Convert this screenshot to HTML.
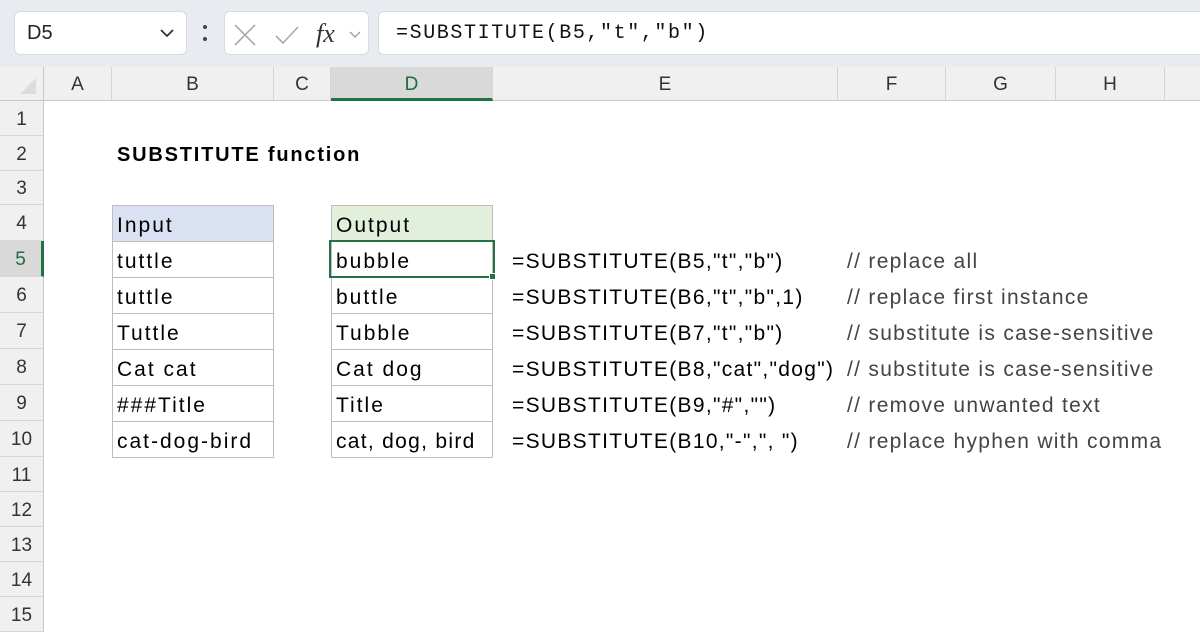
<!DOCTYPE html>
<html><head><style>
*{margin:0;padding:0;box-sizing:border-box}
body{width:1200px;height:630px;overflow:hidden;background:#fff;font-family:"Liberation Sans",sans-serif;position:relative}
.a{position:absolute}
.tb{left:0;top:0;width:1200px;height:67px;background:#e8ecf1}
.box{background:#fff;border:1px solid #d6dbe1;border-radius:6px;height:44px;top:11px}
.ch{top:67px;height:34px;background:#f0f0f0;border-right:1px solid #d4d4d4;border-bottom:1px solid #c8c8c8;text-align:center;line-height:36px;font-size:19px;color:#333}
.rh{left:0;width:44px;background:#f0f0f0;border-bottom:1px solid #d8d8d8;border-right:1px solid #c8c8c8;text-align:center;font-size:19px;color:#333}
.c{font-size:21px;color:#000;padding-left:5px;line-height:36px;white-space:nowrap;letter-spacing:1.3px;margin-top:2px}
.w{letter-spacing:2px}
.bx{border:1px solid #bdbdbd;height:37px}
</style></head><body>
<div class="a tb"></div>
<div class="a box" style="left:14px;width:173px"></div>
<div class="a" style="left:27px;top:22px;font-size:20px;color:#222">D5</div>
<svg class="a" style="left:160px;top:28px" width="14" height="10"><path d="M1 2 L7 8 L13 2" stroke="#333" stroke-width="1.8" fill="none"/></svg>
<div class="a" style="left:203px;top:25px;width:4px;height:4px;background:#444;border-radius:2px"></div>
<div class="a" style="left:203px;top:37px;width:4px;height:4px;background:#444;border-radius:2px"></div>
<div class="a box" style="left:224px;width:145px"></div>
<svg class="a" style="left:232px;top:22px" width="130" height="26"><path d="M3 3 L23 23 M23 3 L3 23" stroke="#aaa" stroke-width="1.6"/><path d="M44 14 L51 21 L66 5" stroke="#aaa" stroke-width="1.6" fill="none"/><path d="M118 10 L123 15 L128 10" stroke="#999" stroke-width="1.3" fill="none"/></svg>
<div class="a" style="left:316px;top:19px;font-family:'Liberation Serif',serif;font-style:italic;font-size:26px;color:#333">fx</div>
<div class="a box" style="left:378px;width:840px"></div>
<div class="a" style="left:396px;top:22px;font-family:'Liberation Mono',monospace;font-size:20px;color:#111;letter-spacing:1.6px">=SUBSTITUTE(B5,"t","b")</div>

<div class="a" style="left:0;top:67px;width:44px;height:34px;background:#f0f0f0;border-right:1px solid #c8c8c8;border-bottom:1px solid #c8c8c8"></div>
<svg class="a" style="left:18px;top:76px" width="20" height="20"><path d="M18 2 L18 18 L2 18Z" fill="#dcdcdc"/></svg>
<div class="a ch" style="left:44px;width:68px">A</div>
<div class="a ch" style="left:112px;width:162px">B</div>
<div class="a ch" style="left:274px;width:57px">C</div>
<div class="a ch" style="left:331px;width:162px;background:#d9d9d9;border-bottom:3px solid #217346;color:#1e6b3f">D</div>
<div class="a ch" style="left:493px;width:345px">E</div>
<div class="a ch" style="left:838px;width:108px">F</div>
<div class="a ch" style="left:946px;width:110px">G</div>
<div class="a ch" style="left:1056px;width:109px">H</div>
<div class="a ch" style="left:1165px;width:40px"></div>

<div class="a rh" style="top:101px;height:35px;line-height:37px">1</div>
<div class="a rh" style="top:136px;height:35px;line-height:37px">2</div>
<div class="a rh" style="top:171px;height:34px;line-height:36px">3</div>
<div class="a rh" style="top:205px;height:36px;line-height:38px">4</div>
<div class="a rh" style="top:241px;height:36px;line-height:38px;background:#d9d9d9;color:#1e6b3f;border-right:3px solid #217346">5</div>
<div class="a rh" style="top:277px;height:36px;line-height:38px">6</div>
<div class="a rh" style="top:313px;height:36px;line-height:38px">7</div>
<div class="a rh" style="top:349px;height:36px;line-height:38px">8</div>
<div class="a rh" style="top:385px;height:36px;line-height:38px">9</div>
<div class="a rh" style="top:421px;height:36px;line-height:38px">10</div>
<div class="a rh" style="top:457px;height:35px;line-height:37px">11</div>
<div class="a rh" style="top:492px;height:35px;line-height:37px">12</div>
<div class="a rh" style="top:527px;height:35px;line-height:37px">13</div>
<div class="a rh" style="top:562px;height:35px;line-height:37px">14</div>
<div class="a rh" style="top:597px;height:35px;line-height:37px">15</div>

<div class="a" style="left:117px;top:144px;font-size:20px;font-weight:bold;letter-spacing:1.8px">SUBSTITUTE function</div>

<div class="a bx" style="left:112px;top:205px;width:162px;background:#d9e1f2"></div>
<div class="a bx" style="left:331px;top:205px;width:162px;background:#e2efda"></div>
<div class="a bx" style="left:112px;top:241px;width:162px;height:217px"></div>
<div class="a bx" style="left:331px;top:241px;width:162px;height:217px"></div>
<div class="a" style="left:112px;top:277px;width:162px;border-top:1px solid #bdbdbd"></div>
<div class="a" style="left:112px;top:313px;width:162px;border-top:1px solid #bdbdbd"></div>
<div class="a" style="left:112px;top:349px;width:162px;border-top:1px solid #bdbdbd"></div>
<div class="a" style="left:112px;top:385px;width:162px;border-top:1px solid #bdbdbd"></div>
<div class="a" style="left:112px;top:421px;width:162px;border-top:1px solid #bdbdbd"></div>
<div class="a" style="left:331px;top:277px;width:162px;border-top:1px solid #bdbdbd"></div>
<div class="a" style="left:331px;top:313px;width:162px;border-top:1px solid #bdbdbd"></div>
<div class="a" style="left:331px;top:349px;width:162px;border-top:1px solid #bdbdbd"></div>
<div class="a" style="left:331px;top:385px;width:162px;border-top:1px solid #bdbdbd"></div>
<div class="a" style="left:331px;top:421px;width:162px;border-top:1px solid #bdbdbd"></div>
<div class="a" style="left:329px;top:240px;width:166px;height:38px;border:2px solid #217346"></div>
<div class="a" style="left:489px;top:273px;width:7px;height:7px;background:#217346;border:1px solid #fff"></div>

<div class="a c w" style="left:112px;top:206px">Input</div>
<div class="a c w" style="left:331px;top:206px">Output</div>
<div class="a c w" style="left:112px;top:242px">tuttle</div>
<div class="a c w" style="left:112px;top:278px">tuttle</div>
<div class="a c w" style="left:112px;top:314px">Tuttle</div>
<div class="a c w" style="left:112px;top:350px">Cat cat</div>
<div class="a c w" style="left:112px;top:386px">###Title</div>
<div class="a c w" style="left:112px;top:422px">cat-dog-bird</div>
<div class="a c w" style="left:331px;top:242px">bubble</div>
<div class="a c w" style="left:331px;top:278px">buttle</div>
<div class="a c w" style="left:331px;top:314px">Tubble</div>
<div class="a c w" style="left:331px;top:350px">Cat dog</div>
<div class="a c w" style="left:331px;top:386px">Title</div>
<div class="a c" style="left:331px;top:422px">cat, dog, bird</div>
<div class="a c" style="left:507px;top:242px">=SUBSTITUTE(B5,"t","b")</div>
<div class="a c" style="left:507px;top:278px">=SUBSTITUTE(B6,"t","b",1)</div>
<div class="a c" style="left:507px;top:314px">=SUBSTITUTE(B7,"t","b")</div>
<div class="a c" style="left:507px;top:350px">=SUBSTITUTE(B8,"cat","dog")</div>
<div class="a c" style="left:507px;top:386px">=SUBSTITUTE(B9,"#","")</div>
<div class="a c" style="left:507px;top:422px">=SUBSTITUTE(B10,"-",", ")</div>
<div class="a c" style="left:842px;top:242px;color:#444">// replace all</div>
<div class="a c" style="left:842px;top:278px;color:#444">// replace first instance</div>
<div class="a c" style="left:842px;top:314px;color:#444">// substitute is case-sensitive</div>
<div class="a c" style="left:842px;top:350px;color:#444">// substitute is case-sensitive</div>
<div class="a c" style="left:842px;top:386px;color:#444">// remove unwanted text</div>
<div class="a c" style="left:842px;top:422px;color:#444">// replace hyphen with comma</div>
</body></html>
